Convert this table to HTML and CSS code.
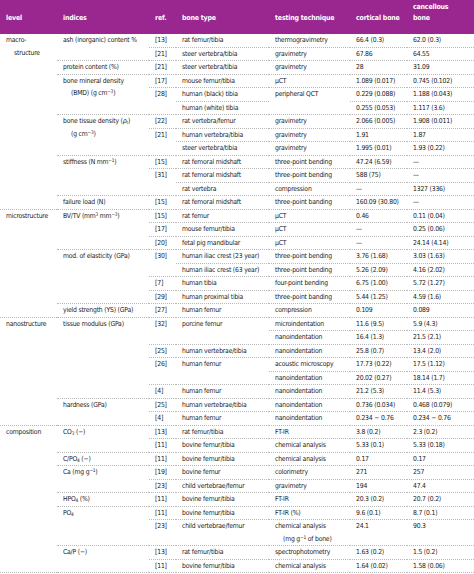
FILE: index.html
```html
<!DOCTYPE html>
<html>
<head>
<meta charset="utf-8">
<link rel="stylesheet" href="styles.css">
</head>
<body>
<table class="data">
<colgroup>
<col class="c-level"><col class="c-ind"><col class="c-ref"><col class="c-bone"><col class="c-tech"><col class="c-cort"><col class="c-canc">
</colgroup>
<thead>
<tr><th>level</th><th>indices</th><th>ref.</th><th>bone type</th><th>testing technique</th><th>cortical bone</th><th>cancellous<br>bone</th></tr>
</thead>
<tbody>
<tr><td rowspan="13" class="hang">macro-<br>structure</td><td rowspan="2">ash (inorganic) content %</td><td>[13]</td><td>rat femur/tibia</td><td>thermogravimetry</td><td>66.4 (0.3)</td><td>62.0 (0.3)</td></tr>
<tr><td>[21]</td><td>steer vertebra/tibia</td><td>gravimetry</td><td>67.86</td><td>64.55</td></tr>
<tr><td>protein content (%)</td><td>[21]</td><td>steer vertebra/tibia</td><td>gravimetry</td><td>28</td><td>31.09</td></tr>
<tr><td rowspan="3" class="hang">bone mineral density<br>(BMD) (g cm<sup>−3</sup>)</td><td>[17]</td><td>mouse femur/tibia</td><td>μCT</td><td>1.089 (0.017)</td><td>0.745 (0.102)</td></tr>
<tr><td rowspan="2">[28]</td><td>human (black) tibia</td><td rowspan="2">peripheral QCT</td><td>0.229 (0.088)</td><td>1.188 (0.043)</td></tr>
<tr><td>human (white) tibia</td><td>0.255 (0.053)</td><td>1.117 (3.6)</td></tr>
<tr><td rowspan="3" class="hang">bone tissue density (<i>ρ</i><sub>t</sub>)<br>(g cm<sup>−3</sup>)</td><td>[22]</td><td>rat vertebra/femur</td><td>gravimetry</td><td>2.066 (0.005)</td><td>1.908 (0.011)</td></tr>
<tr><td rowspan="2">[21]</td><td>human vertebra/tibia</td><td>gravimetry</td><td>1.91</td><td>1.87</td></tr>
<tr><td>steer vertebra/tibia</td><td>gravimetry</td><td>1.995 (0.01)</td><td>1.93 (0.22)</td></tr>
<tr><td rowspan="3">stiffness (N mm<sup>−1</sup>)</td><td>[15]</td><td>rat femoral midshaft</td><td>three-point bending</td><td>47.24 (6.59)</td><td>—</td></tr>
<tr><td rowspan="2">[31]</td><td>rat femoral midshaft</td><td>three-point bending</td><td>588 (75)</td><td>—</td></tr>
<tr><td>rat vertebra</td><td>compression</td><td>—</td><td>1327 (336)</td></tr>
<tr><td>failure load (N)</td><td>[15]</td><td>rat femoral midshaft</td><td>three-point banding</td><td>160.09 (30.80)</td><td>—</td></tr>

<tr><td rowspan="8">microstructure</td><td rowspan="3">BV/TV (mm<sup>3</sup> mm<sup>−3</sup>)</td><td>[15]</td><td>rat femur</td><td>μCT</td><td>0.46</td><td>0.11 (0.04)</td></tr>
<tr><td>[17]</td><td>mouse femur/tibia</td><td>μCT</td><td>—</td><td>0.25 (0.06)</td></tr>
<tr><td>[20]</td><td>fetal pig mandibular</td><td>μCT</td><td>—</td><td>24.14 (4.14)</td></tr>
<tr><td rowspan="4">mod. of elasticity (GPa)</td><td rowspan="2">[30]</td><td>human iliac crest (23 year)</td><td>three-point bending</td><td>3.76 (1.68)</td><td>3.03 (1.63)</td></tr>
<tr><td>human iliac crest (63 year)</td><td>three-point bending</td><td>5.26 (2.09)</td><td>4.16 (2.02)</td></tr>
<tr><td>[7]</td><td>human tibia</td><td>four-point bending</td><td>6.75 (1.00)</td><td>5.72 (1.27)</td></tr>
<tr><td>[29]</td><td>human proximal tibia</td><td>three-point banding</td><td>5.44 (1.25)</td><td>4.59 (1.6)</td></tr>
<tr><td>yield strength (YS) (GPa)</td><td>[27]</td><td>human femur</td><td>compression</td><td>0.109</td><td>0.089</td></tr>

<tr><td rowspan="8">nanostructure</td><td rowspan="6">tissue modulus (GPa)</td><td rowspan="2">[32]</td><td rowspan="2">porcine femur</td><td>microindentation</td><td>11.6 (9.5)</td><td>5.9 (4.3)</td></tr>
<tr><td>nanoindentation</td><td>16.4 (1.3)</td><td>21.5 (2.1)</td></tr>
<tr><td>[25]</td><td>human vertebrae/tibia</td><td>nanoindentation</td><td>25.8 (0.7)</td><td>13.4 (2.0)</td></tr>
<tr><td rowspan="2">[26]</td><td rowspan="2">human femur</td><td>acoustic microscopy</td><td>17.73 (0.22)</td><td>17.5 (1.12)</td></tr>
<tr><td>nanoindentation</td><td>20.02 (0.27)</td><td>18.14 (1.7)</td></tr>
<tr><td>[4]</td><td>human femur</td><td>nanoindentation</td><td>21.2 (5.3)</td><td>11.4 (5.3)</td></tr>
<tr><td rowspan="2">hardness (GPa)</td><td>[25]</td><td>human vertebrae/tibia</td><td>nanoindentation</td><td>0.736 (0.034)</td><td>0.468 (0.079)</td></tr>
<tr><td>[4]</td><td>human femur</td><td>nanoindentation</td><td>0.234 − 0.76</td><td>0.234 − 0.76</td></tr>

<tr><td rowspan="10">composition</td><td rowspan="2">CO<sub>3</sub> (−)</td><td>[13]</td><td>rat femur/tibia</td><td>FT-IR</td><td>3.8 (0.2)</td><td>2.3 (0.2)</td></tr>
<tr><td>[11]</td><td>bovine femur/tibia</td><td>chemical analysis</td><td>5.33 (0.1)</td><td>5.33 (0.18)</td></tr>
<tr><td>C/PO<sub>4</sub> (−)</td><td>[11]</td><td>bovine femur/tibia</td><td>chemical analysis</td><td>0.17</td><td>0.17</td></tr>
<tr><td rowspan="2">Ca (mg g<sup>−1</sup>)</td><td>[19]</td><td>bovine femur</td><td>colorimetry</td><td>271</td><td>257</td></tr>
<tr><td>[23]</td><td>child vertebrae/femur</td><td>gravimetry</td><td>194</td><td>47.4</td></tr>
<tr><td>HPO<sub>4</sub> (%)</td><td>[11]</td><td>bovine femur/tibia</td><td>FT-IR</td><td>20.3 (0.2)</td><td>20.7 (0.2)</td></tr>
<tr><td rowspan="2">PO<sub>4</sub></td><td>[11]</td><td>bovine femur/tibia</td><td>FT-IR (%)</td><td>9.6 (0.1)</td><td>8.7 (0.1)</td></tr>
<tr><td>[23]</td><td>child vertebrae/femur</td><td class="hang">chemical analysis<br>(mg g<sup>−1</sup> of bone)</td><td>24.1</td><td>90.3</td></tr>
<tr><td rowspan="2">Ca/P (−)</td><td>[13]</td><td>rat femur/tibia</td><td>spectrophotometry</td><td>1.63 (0.2)</td><td>1.5 (0.2)</td></tr>
<tr><td>[11]</td><td>bovine femur/tibia</td><td>chemical analysis</td><td>1.64 (0.02)</td><td>1.58 (0.06)</td></tr>
</tbody>
</table>
</body>
</html>
```
FILE: styles.css
```css
html, body {
  margin: 0;
  padding: 0;
  background: #ffffff;
}
body {
  font-family: "DejaVu Sans Condensed", "DejaVu Sans", "Liberation Sans", Arial, sans-serif;
  font-stretch: condensed;
  color: #1a1a1a;
}
.data {
  border-collapse: collapse;
  table-layout: fixed;
  width: 474px;
}
.c-level { width: 57px; }
.c-ind { width: 92px; }
.c-ref { width: 27px; }
.c-bone { width: 93px; }
.c-tech { width: 81px; }
.c-cort { width: 57px; }
.c-canc { width: 67px; }

.data thead tr {
  height: 34px;
}
.data th {
  background: #9a2790;
  color: #ffffff;
  font-weight: bold;
  font-size: 7px;
  letter-spacing: -0.2px;
  line-height: 11px;
  text-align: left;
  vertical-align: bottom;
  padding: 0 0 10px 6px;
  white-space: nowrap;
}
.data td {
  font-size: 6.8px;
  letter-spacing: -0.2px;
  line-height: 12.5px;
  padding: 0 0 0 6px;
  vertical-align: top;
  white-space: nowrap;
  border-bottom: 1px dotted #b8b8b8;
}
.data td.hang {
  padding-left: 14px;
  text-indent: -8px;
}
.data sup, .data sub {
  font-size: 70%;
  line-height: 0;
}
.data sup { vertical-align: 0.45em; }
.data sub { vertical-align: -0.25em; }
```
